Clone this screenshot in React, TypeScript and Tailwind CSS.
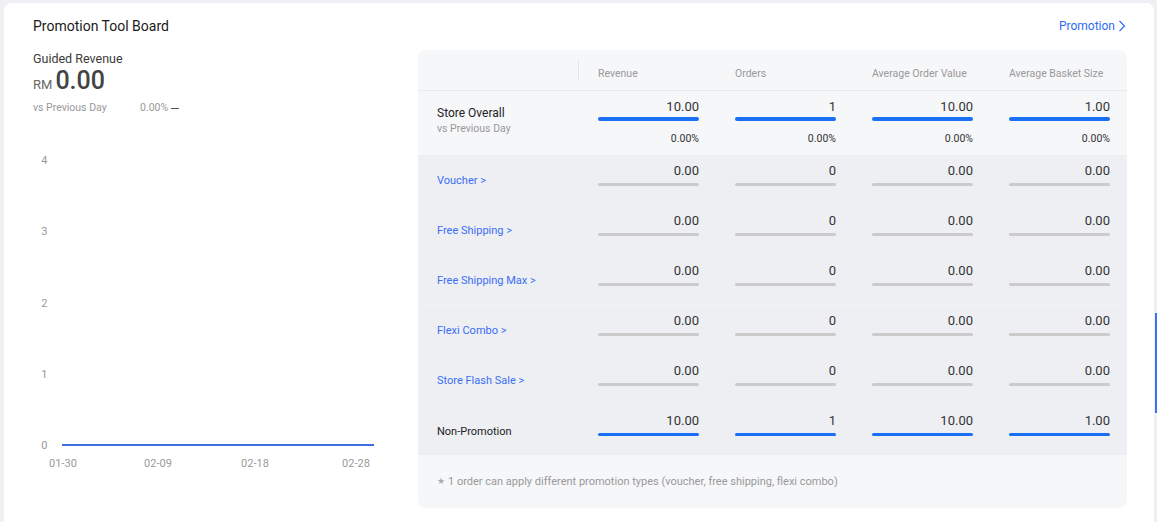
import React from 'react';

type Metric = { value: string; active: boolean };

interface PromoRow {
  label: string;
  link: boolean;
  metrics: Metric[];
}

const columns = ['Revenue', 'Orders', 'Average Order Value', 'Average Basket Size'];

const overall: Metric[] = [
  { value: '10.00', active: true },
  { value: '1', active: true },
  { value: '10.00', active: true },
  { value: '1.00', active: true },
];

const zeroes: Metric[] = [
  { value: '0.00', active: false },
  { value: '0', active: false },
  { value: '0.00', active: false },
  { value: '0.00', active: false },
];

const rows: PromoRow[] = [
  { label: 'Voucher >', link: true, metrics: zeroes },
  { label: 'Free Shipping >', link: true, metrics: zeroes },
  { label: 'Free Shipping Max >', link: true, metrics: zeroes },
  { label: 'Flexi Combo >', link: true, metrics: zeroes },
  { label: 'Store Flash Sale >', link: true, metrics: zeroes },
  { label: 'Non-Promotion', link: false, metrics: overall },
];

const RevenueChart: React.FC = () => {
  const yTicks = [4, 3, 2, 1, 0];
  const xTicks = [
    { label: '01-30', x: 30 },
    { label: '02-09', x: 125 },
    { label: '02-18', x: 222 },
    { label: '02-28', x: 323 },
  ];

  return (
    <svg width="357" height="335" className="mt-[30px] block" fontFamily="Roboto, 'Liberation Sans', sans-serif">
      {yTicks.map((t, i) => (
        <text key={t} x="14.5" y={19 + i * 71.3} textAnchor="end" fontSize="11" fill="#9a9a9a">
          {t}
        </text>
      ))}
      <line x1="29" y1="300" x2="341" y2="300" stroke="#3d6fe3" strokeWidth="2" />
      {xTicks.map((t) => (
        <text key={t.label} x={t.x} y="322" textAnchor="middle" fontSize="11" fill="#9a9a9a">
          {t.label}
        </text>
      ))}
    </svg>
  );
};

const MetricCell: React.FC<{ metric: Metric; thick?: boolean }> = ({ metric, thick }) => (
  <div className="w-[137px] pl-[19px] pr-[17px]">
    <div className="text-right text-[13px] leading-[16px] text-[#333]">{metric.value}</div>
    <div
      className={`${thick ? 'mt-[2px] h-[4px]' : 'mt-[4px] h-[3px]'} rounded-full ${
        metric.active ? 'bg-[#1a6ff5]' : 'bg-[#cbcbcb]'
      }`}
    />
  </div>
);

export default function App() {
  return (
    <div
      className="relative h-[522px] w-[1157px] overflow-hidden bg-[#eef0f3] pl-[4px] pt-[3px]"
      style={{ fontFamily: "Roboto, 'Liberation Sans', sans-serif" }}
    >
      <div className="h-[560px] w-[1150px] rounded-lg bg-white pl-[29px] pr-[28px] pt-[14px]">
        <div className="flex items-center justify-between">
          <h1 className="text-[14px] font-normal leading-[18px] text-[#1a1a1a]">Promotion Tool Board</h1>
          <a className="flex items-center gap-[3px] text-[12px] leading-[18px] text-[#2f6cf6]">
            Promotion
            <svg width="8" height="12" viewBox="0 0 8 12" fill="none">
              <path d="M1.5 1 L6.5 6 L1.5 11" stroke="#2f6cf6" strokeWidth="1.2" />
            </svg>
          </a>
        </div>

        <div className="mt-[15px] flex gap-[28px]">
          {/* guided revenue */}
          <div className="w-[357px] shrink-0">
            <div className="text-[12.5px] leading-[17px] text-[#3a3a3a]">Guided Revenue</div>
            <div className="flex items-baseline gap-[3px] leading-[28px]">
              <span className="text-[13px] text-[#666]">RM</span>
              <span className="text-[25px] font-medium text-[#444]">0.00</span>
            </div>
            <div className="mt-[2px] flex items-center text-[10.5px] leading-[14px] text-[#999]">
              <span className="w-[107px]">vs Previous Day</span>
              <span>0.00%</span>
              <span className="ml-[3px] inline-block h-px w-[8px] bg-[#555]" />
            </div>
            <RevenueChart />
          </div>

          {/* breakdown table */}
          <div className="w-[709px] shrink-0 overflow-hidden rounded-lg bg-[#f6f7f9]">
            <div className="flex h-[41px] border-b border-[#e9eaee]">
              <div className="flex w-[161px] items-center justify-end">
                <div className="h-[20px] w-px bg-[#e3e4e8]" />
              </div>
              {columns.map((c) => (
                <div key={c} className="w-[137px] pl-[19px] pt-[16px] text-[10.5px] leading-[16px] text-[#999]">
                  {c}
                </div>
              ))}
            </div>

            <div className="flex h-[64px]">
              <div className="w-[161px] pl-[19px] pt-[14px]">
                <div className="text-[12px] leading-[16px] text-[#222]">Store Overall</div>
                <div className="text-[10.5px] leading-[16px] text-[#999]">vs Previous Day</div>
              </div>
              {overall.map((m, i) => (
                <div key={i} className="pt-[8px]">
                  <MetricCell metric={m} thick />
                  <div className="mt-[10px] pr-[17px] text-right text-[10.5px] leading-[16px] text-[#333]">0.00%</div>
                </div>
              ))}
            </div>

            <div className="bg-[#edeff3]">
              {rows.map((r) => (
                <div key={r.label} className="flex h-[50px] border-b border-[#f1f2f5] last:border-b-0">
                  <div
                    className={`flex w-[161px] items-center pl-[19px] pt-[4px] text-[11px] ${
                      r.link ? 'text-[#3b6ef5]' : 'text-[#222]'
                    }`}
                  >
                    {r.label}
                  </div>
                  {r.metrics.map((m, i) => (
                    <div key={i} className="pt-[8px]">
                      <MetricCell metric={m} />
                    </div>
                  ))}
                </div>
              ))}
            </div>

            <div className="flex h-[53px] items-center pl-[19px] pt-[1px] text-[11px] text-[#999]">
              <span className="mr-[3px] text-[9px] text-[#aaa]">★</span>
              1 order can apply different promotion types (voucher, free shipping, flexi combo)
            </div>
          </div>
        </div>
      </div>
      <div className="absolute right-0 top-[313px] h-[100px] w-[2px] bg-[#3d6ff0]" />
    </div>
  );
}
